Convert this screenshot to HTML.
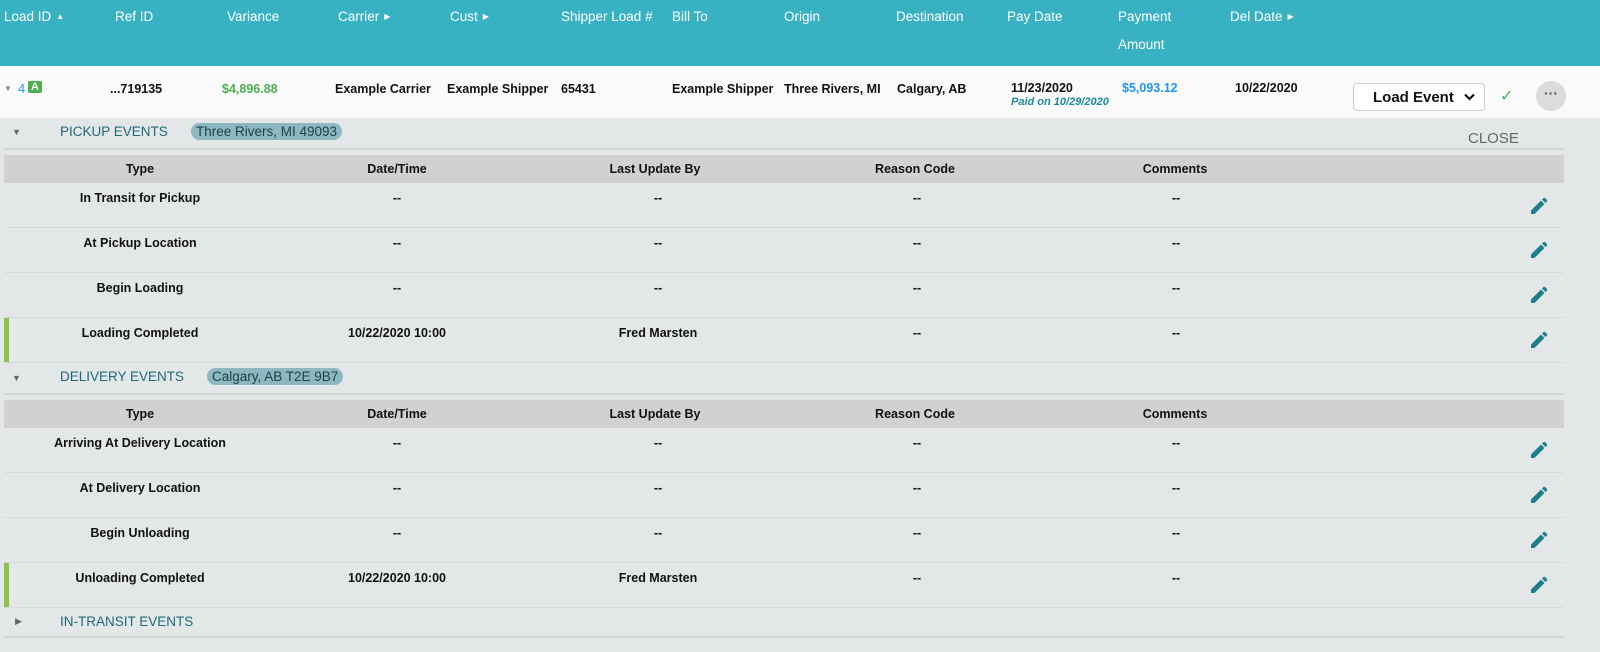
<!DOCTYPE html>
<html><head><style>
*{margin:0;padding:0;box-sizing:border-box}
body{width:1600px;height:652px;overflow:hidden;background:#e3e7e8;font-family:"Liberation Sans",sans-serif;position:relative;font-size:13px;color:#111}
.a{position:absolute;white-space:nowrap}
.hd{position:absolute;left:0;top:0;width:1600px;height:66px;background:#38b2c2}
.hd .a{color:#fff;font-size:13.5px;top:9px}
.tri{font-size:8px;vertical-align:2px;margin-left:5px}
.row{position:absolute;left:0;top:66px;width:1600px;height:52px;background:#fafafa;border-top:6px solid #fff}
.b{font-weight:bold;font-size:12.5px}
.sec{color:#1e6a78;font-size:13.5px}
.pill{background:#8db8c2;color:#1d3f47;border-radius:10px;padding:1px 5px;font-size:13.5px}
.th{position:absolute;left:4px;width:1560px;height:28px;background:#d0d1d0}
.line{position:absolute;left:4px;width:1560px;height:2px;background:#d2d6d7}
.sep{position:absolute;left:4px;width:1560px;height:1px;background:#d6dadb}
.c{position:absolute;text-align:center;font-weight:bold;font-size:12.5px;white-space:nowrap;transform:translateX(-50%)}
.g{position:absolute;left:4px;width:5px;background:#8bc34a}
</style></head><body>
<div class="hd">
<span class="a" style="left:4px">Load ID<span class="tri">▲</span></span>
<span class="a" style="left:115px">Ref ID</span>
<span class="a" style="left:227px">Variance</span>
<span class="a" style="left:338px">Carrier<span class="tri">▶</span></span>
<span class="a" style="left:450px">Cust<span class="tri">▶</span></span>
<span class="a" style="left:561px">Shipper Load #</span>
<span class="a" style="left:672px">Bill To</span>
<span class="a" style="left:784px">Origin</span>
<span class="a" style="left:896px">Destination</span>
<span class="a" style="left:1007px">Pay Date</span>
<span class="a" style="left:1118px">Payment</span>
<span class="a" style="left:1118px;top:37px">Amount</span>
<span class="a" style="left:1230px">Del Date<span class="tri">▶</span></span>
</div>
<div class="row"></div>
<span class="a" style="left:4px;top:84px;color:#888;font-size:8px">▼</span>
<span class="a" style="left:18px;top:81px;color:#2196f3;font-size:13px">4</span>
<span class="a" style="left:28px;top:81px;background:#4caf50;color:#fff;font-weight:bold;font-size:11px;padding:0 3px;border-radius:2px">A</span>
<span class="a b" style="left:110px;top:82px">...719135</span>
<span class="a b" style="left:222px;top:82px;color:#4caf50">$4,896.88</span>
<span class="a b" style="left:335px;top:82px">Example Carrier</span>
<span class="a b" style="left:447px;top:82px">Example Shipper</span>
<span class="a b" style="left:561px;top:82px">65431</span>
<span class="a b" style="left:672px;top:82px">Example Shipper</span>
<span class="a b" style="left:784px;top:82px">Three Rivers, MI</span>
<span class="a b" style="left:897px;top:82px">Calgary, AB</span>
<span class="a b" style="left:1011px;top:81px">11/23/2020</span>
<span class="a" style="left:1011px;top:96px;color:#1e8a9a;font-style:italic;font-weight:bold;font-size:11px">Paid on 10/29/2020</span>
<span class="a b" style="left:1122px;top:81px;color:#2196f3">$5,093.12</span>
<span class="a b" style="left:1235px;top:81px">10/22/2020</span>
<div class="a" style="left:1353px;top:83px;width:132px;height:28px;background:#fff;border:1px solid #ccc;border-radius:4px;font-size:15px;font-weight:bold;padding:5px 0 0 19px;overflow:hidden">Load Events<span style="position:absolute;right:0;top:0;width:30px;height:26px;background:#fff"></span><svg style="position:absolute;right:9px;top:9px" width="11" height="8"><path d="M1 1.5 L5.5 6 L10 1.5" stroke="#111" stroke-width="2.2" fill="none"/></svg></div>
<span class="a" style="left:1500px;top:86px;color:#4caf50;font-size:16px">✓</span>
<div class="a" style="left:1536px;top:81px;width:30px;height:30px;border-radius:50%;background:#dcdcdc;color:#555;text-align:center;font-size:14px;line-height:24px;font-weight:bold">···</div>

<span class="a" style="left:12px;top:127px;color:#666;font-size:9px">▼</span>
<span class="a sec" style="left:60px;top:124px">PICKUP EVENTS</span>
<span class="a pill" style="left:191px;top:123px">Three Rivers, MI 49093</span>
<span class="a" style="left:1468px;top:130px;color:#666;font-size:15px">CLOSE</span>
<div class="line" style="top:148px"></div>
<div class="th" style="top:155px"></div>
<div class="c" style="left:140px;top:162px">Type</div><div class="c" style="left:397px;top:162px">Date/Time</div><div class="c" style="left:655px;top:162px">Last Update By</div><div class="c" style="left:915px;top:162px">Reason Code</div><div class="c" style="left:1175px;top:162px">Comments</div>

<div class="c" style="left:140px;top:191px">In Transit for Pickup</div>
<div class="c" style="left:140px;top:236px">At Pickup Location</div>
<div class="c" style="left:140px;top:281px">Begin Loading</div>
<div class="c" style="left:140px;top:326px">Loading Completed</div>
<div class="c" style="left:397px;top:191px">--</div><div class="c" style="left:397px;top:236px">--</div><div class="c" style="left:397px;top:281px">--</div><div class="c" style="left:397px;top:326px">10/22/2020 10:00</div>
<div class="c" style="left:658px;top:191px">--</div><div class="c" style="left:658px;top:236px">--</div><div class="c" style="left:658px;top:281px">--</div><div class="c" style="left:658px;top:326px">Fred Marsten</div>
<div class="c" style="left:917px;top:191px">--</div><div class="c" style="left:917px;top:236px">--</div><div class="c" style="left:917px;top:281px">--</div><div class="c" style="left:917px;top:326px">--</div>
<div class="c" style="left:1176px;top:191px">--</div><div class="c" style="left:1176px;top:236px">--</div><div class="c" style="left:1176px;top:281px">--</div><div class="c" style="left:1176px;top:326px">--</div>
<div class="sep" style="top:227px"></div><div class="sep" style="top:272px"></div><div class="sep" style="top:317px"></div><div class="sep" style="top:362px"></div>
<div class="g" style="top:318px;height:44px"></div>

<span class="a" style="left:12px;top:373px;color:#666;font-size:9px">▼</span>
<span class="a sec" style="left:60px;top:369px">DELIVERY EVENTS</span>
<span class="a pill" style="left:207px;top:368px">Calgary, AB T2E 9B7</span>
<div class="line" style="top:393px"></div>
<div class="th" style="top:400px"></div>
<div class="c" style="left:140px;top:407px">Type</div><div class="c" style="left:397px;top:407px">Date/Time</div><div class="c" style="left:655px;top:407px">Last Update By</div><div class="c" style="left:915px;top:407px">Reason Code</div><div class="c" style="left:1175px;top:407px">Comments</div>
<div class="c" style="left:140px;top:436px">Arriving At Delivery Location</div>
<div class="c" style="left:140px;top:481px">At Delivery Location</div>
<div class="c" style="left:140px;top:526px">Begin Unloading</div>
<div class="c" style="left:140px;top:571px">Unloading Completed</div>
<div class="c" style="left:397px;top:436px">--</div><div class="c" style="left:397px;top:481px">--</div><div class="c" style="left:397px;top:526px">--</div><div class="c" style="left:397px;top:571px">10/22/2020 10:00</div>
<div class="c" style="left:658px;top:436px">--</div><div class="c" style="left:658px;top:481px">--</div><div class="c" style="left:658px;top:526px">--</div><div class="c" style="left:658px;top:571px">Fred Marsten</div>
<div class="c" style="left:917px;top:436px">--</div><div class="c" style="left:917px;top:481px">--</div><div class="c" style="left:917px;top:526px">--</div><div class="c" style="left:917px;top:571px">--</div>
<div class="c" style="left:1176px;top:436px">--</div><div class="c" style="left:1176px;top:481px">--</div><div class="c" style="left:1176px;top:526px">--</div><div class="c" style="left:1176px;top:571px">--</div>
<div class="sep" style="top:472px"></div><div class="sep" style="top:517px"></div><div class="sep" style="top:562px"></div><div class="sep" style="top:607px"></div>
<div class="g" style="top:563px;height:44px"></div>

<span class="a" style="left:15px;top:616px;color:#666;font-size:9px">▶</span>
<span class="a sec" style="left:60px;top:614px">IN-TRANSIT EVENTS</span>
<div class="line" style="top:636px"></div>

<svg width="0" height="0" style="position:absolute"><defs><g id="p"><path d="M2 17 L2 13.5 L12 3.5 L15.5 7 L5.5 17 Z M13 2.5 L14.5 1 Q15.2 0.4 16 1 L18 3 Q18.6 3.8 18 4.5 L16.5 6 Z" fill="#1e7f8c"/></g></defs></svg>
<svg class="a" style="left:1529px;top:197px" width="20" height="19"><use href="#p"/></svg>
<svg class="a" style="left:1529px;top:241px" width="20" height="19"><use href="#p"/></svg>
<svg class="a" style="left:1529px;top:286px" width="20" height="19"><use href="#p"/></svg>
<svg class="a" style="left:1529px;top:331px" width="20" height="19"><use href="#p"/></svg>
<svg class="a" style="left:1529px;top:441px" width="20" height="19"><use href="#p"/></svg>
<svg class="a" style="left:1529px;top:486px" width="20" height="19"><use href="#p"/></svg>
<svg class="a" style="left:1529px;top:531px" width="20" height="19"><use href="#p"/></svg>
<svg class="a" style="left:1529px;top:576px" width="20" height="19"><use href="#p"/></svg>
</body></html>
